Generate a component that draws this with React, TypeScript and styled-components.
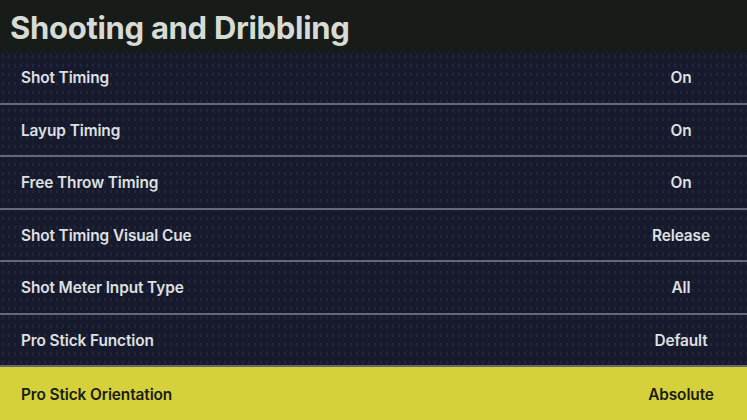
import React from 'react';
import styled, { createGlobalStyle } from 'styled-components';

interface Setting {
  label: string;
  value: string;
}

const settings: Setting[] = [
  { label: 'Shot Timing', value: 'On' },
  { label: 'Layup Timing', value: 'On' },
  { label: 'Free Throw Timing', value: 'On' },
  { label: 'Shot Timing Visual Cue', value: 'Release' },
  { label: 'Shot Meter Input Type', value: 'All' },
  { label: 'Pro Stick Function', value: 'Default' },
  { label: 'Pro Stick Orientation', value: 'Absolute' },
];

const SELECTED = 6;

const GlobalStyle = createGlobalStyle`
  html, body {
    margin: 0;
    padding: 0;
    background: #171a2c;
  }
  body {
    font-family: Inter, "Noto Sans", sans-serif;
  }
`;

const Screen = styled('div')({
  width: 747,
  height: 420,
  overflow: 'hidden',
  display: 'flex',
  flexDirection: 'column',
  background: '#171a2c',
});

const Header = styled('header')({
  height: 52,
  flexShrink: 0,
  background: '#171c19',
  display: 'flex',
  alignItems: 'center',
  paddingLeft: 10,
  paddingTop: 2,
  boxSizing: 'border-box',
});

const Title = styled('h1')({
  margin: 0,
  fontSize: 31,
  fontWeight: 700,
  letterSpacing: -0.3,
  color: '#d7dbd5',
  lineHeight: 1,
});

// faint dotted texture standing in for the binary pattern
const List = styled('ul')({
  listStyle: 'none',
  margin: 0,
  padding: 0,
  flex: 1,
  display: 'flex',
  flexDirection: 'column',
  backgroundColor: '#171a2c',
  backgroundImage:
    'radial-gradient(rgba(38,42,64,0.7) 1px, transparent 1.6px)',
  backgroundSize: '6px 9px',
});

const Row = styled('li')<{ $selected: boolean }>(({ $selected }) => ({
  height: $selected ? 54 : 52.5,
  boxSizing: 'border-box',
  display: 'grid',
  gridTemplateColumns: '1fr 132px',
  alignItems: 'center',
  paddingLeft: 21,
  borderBottom: $selected ? 'none' : '2px solid #65687a',
  background: $selected ? '#d5d13a' : 'transparent',
  color: $selected ? '#1b1b16' : '#dfe0e3',
  fontSize: 15.4,
  fontWeight: 600,
  letterSpacing: -0.1,
}));

const Label = styled('span')({
  paddingTop: 1,
});

const Value = styled('span')({
  textAlign: 'center',
  paddingTop: 1,
});

export default function App() {
  return (
    <>
      <GlobalStyle />
      <Screen>
        <Header>
          <Title>Shooting and Dribbling</Title>
        </Header>
        <List>
          {settings.map((s, i) => (
            <Row key={s.label} $selected={i === SELECTED}>
              <Label>{s.label}</Label>
              <Value>{s.value}</Value>
            </Row>
          ))}
        </List>
      </Screen>
    </>
  );
}
